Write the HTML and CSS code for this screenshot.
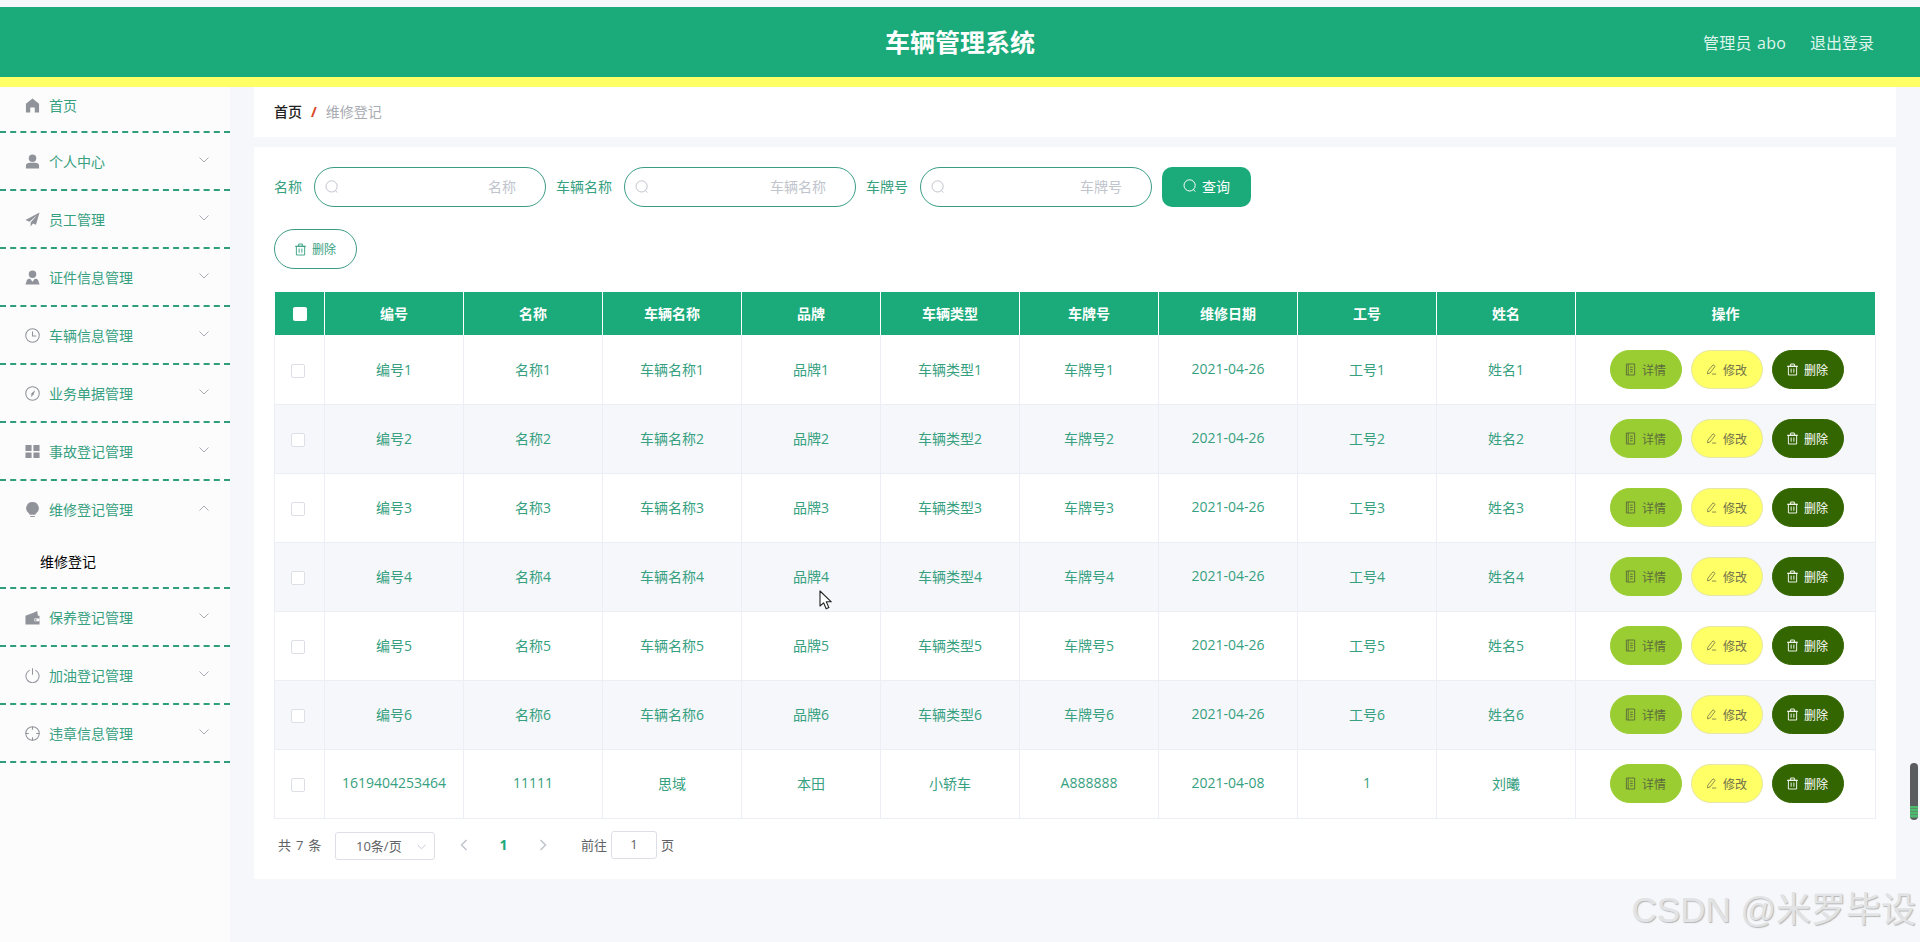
FILE: index.html
```html
<!DOCTYPE html>
<html lang="zh-CN">
<head>
<meta charset="utf-8">
<title>车辆管理系统</title>
<link rel="stylesheet" href="styles.css">
</head>
<body>
<svg class="defs" width="0" height="0" aria-hidden="true">
  <defs>
    <symbol id="i-search" viewBox="0 0 14 14"><circle cx="6.6" cy="6.4" r="5.6" fill="none" stroke="currentColor" stroke-width="1"/><path d="M10.4 10.4l1.8 2.2" stroke="currentColor" fill="none"/></symbol>
    <symbol id="i-trash" viewBox="0 0 12 14"><path d="M1.500 3.500h9V13h-9zM0 3.500h12M4 3.500V1h4v2.500M4.500 6v4.500M7.500 6v4.500" fill="none" stroke="currentColor" stroke-width="1"/></symbol>
    <symbol id="i-doc" viewBox="0 0 12 14"><path d="M1.500 1h9v12h-9zM3.500 1v12M5.500 4.500h3M5.500 7h3M5.500 9.500h3" fill="none" stroke="currentColor" stroke-width="1"/></symbol>
    <symbol id="i-pen" viewBox="0 0 14 14"><path d="M9 1l2.600 2L5.200 11.400 2 12.600l.3-3.400zM7.600 12.800H13" fill="none" stroke="currentColor" stroke-width="1"/></symbol>
    <symbol id="i-chev" viewBox="0 0 10 6"><path d="M.5.5L5 5 9.500.5" fill="none" stroke="currentColor" stroke-width="1"/></symbol>
    <symbol id="i-up" viewBox="0 0 10 6"><path d="M.5 5.500L5 1l4.500 4.500" fill="none" stroke="currentColor" stroke-width="1"/></symbol>
    <symbol id="i-home" viewBox="0 0 16 16"><path d="M8 .5L15 6v9.500h-4.600V10H5.600v5.500H1V6z" fill="currentColor"/></symbol>
    <symbol id="i-user" viewBox="0 0 16 16"><circle cx="8" cy="4.400" r="4" fill="currentColor"/><path d="M1 15.500v-3C1 10 3.500 9.400 8 9.400s7 .6 7 3.100v3z" fill="currentColor"/></symbol>
    <symbol id="i-user2" viewBox="0 0 16 16"><circle cx="8" cy="4.400" r="4" fill="currentColor"/><path d="M.5 15.500L2 11c.5-1.500 2-1.800 3.500-1.800L8 12.500l2.500-3.300c1.500 0 3 .3 3.500 1.800l1.500 4.500z" fill="currentColor"/></symbol>
    <symbol id="i-plane" viewBox="0 0 16 16"><path d="M15.500.5L.5 8.500l4.200 1.800L13 3.200 6 11.200v4.300l2.500-3.200 3.200 1.400z" fill="currentColor"/></symbol>
    <symbol id="i-clock" viewBox="0 0 16 16"><circle cx="8" cy="8" r="7.200" fill="none" stroke="currentColor" stroke-width="1.100"/><path d="M8 3.600V8.500h4" fill="none" stroke="currentColor" stroke-width="1.100"/></symbol>
    <symbol id="i-compass" viewBox="0 0 16 16"><circle cx="8" cy="8" r="7.200" fill="none" stroke="currentColor" stroke-width="1.100"/><path d="M10.800 4.400L9.200 9 6.500 11.600 6.900 7.600z" fill="currentColor"/></symbol>
    <symbol id="i-grid" viewBox="0 0 16 16"><path d="M.5 1h6.500v6.500H.5zM9 1h6.500v6.500H9zM.5 9H7v6H.5zM9 9h6.500v6H9z" fill="currentColor"/></symbol>
    <symbol id="i-bulb" viewBox="0 0 16 16"><path d="M8 0a6.700 6.700 0 0 1 4 12.100c-.7.500-1 .9-1 1.400H5c0-.5-.3-.9-1-1.400A6.700 6.700 0 0 1 8 0z" fill="currentColor"/><path d="M5.500 15h5v1h-5z" fill="currentColor"/></symbol>
    <symbol id="i-wallet" viewBox="0 0 16 16"><path d="M.5 6L9 3l4-2 .8 5h1.700v9.500H.5z" fill="currentColor"/><path d="M10 9h5.500v3H10z" fill="#fcfcfd"/><circle cx="11.500" cy="10.500" r=".9" fill="currentColor"/></symbol>
    <symbol id="i-power" viewBox="0 0 16 16"><path d="M5 2.300a7 7 0 1 0 6 0" fill="none" stroke="currentColor" stroke-width="1.100"/><path d="M8 .2v7" fill="none" stroke="currentColor" stroke-width="1.100"/></symbol>
    <symbol id="i-aim" viewBox="0 0 16 16"><circle cx="8" cy="8" r="7.200" fill="none" stroke="currentColor" stroke-width="1.100"/><path d="M8 .5v3.500M8 12v3.500M.5 8H4M12 8h3.500" stroke="currentColor" stroke-width="1.100"/></symbol>
  </defs>
</svg>

<header class="topbar">
  <div class="topbar-side"></div>
  <h1 class="title">车辆管理系统</h1>
  <div class="userbox"><span class="who">管理员 abo</span><span>退出登录</span></div>
</header>

<div class="layout">
  <aside class="sidebar">
    <div class="menu-item first"><svg class="mi"><use href="#i-home"/></svg><span>首页</span></div>
    <div class="menu-item"><svg class="mi"><use href="#i-user"/></svg><span>个人中心</span><svg class="chev"><use href="#i-chev"/></svg></div>
    <div class="menu-item"><svg class="mi"><use href="#i-plane"/></svg><span>员工管理</span><svg class="chev"><use href="#i-chev"/></svg></div>
    <div class="menu-item"><svg class="mi"><use href="#i-user2"/></svg><span>证件信息管理</span><svg class="chev"><use href="#i-chev"/></svg></div>
    <div class="menu-item"><svg class="mi"><use href="#i-clock"/></svg><span>车辆信息管理</span><svg class="chev"><use href="#i-chev"/></svg></div>
    <div class="menu-item"><svg class="mi"><use href="#i-compass"/></svg><span>业务单据管理</span><svg class="chev"><use href="#i-chev"/></svg></div>
    <div class="menu-item"><svg class="mi"><use href="#i-grid"/></svg><span>事故登记管理</span><svg class="chev"><use href="#i-chev"/></svg></div>
    <div class="menu-group">
      <div class="menu-head"><svg class="mi"><use href="#i-bulb"/></svg><span>维修登记管理</span><svg class="chev"><use href="#i-up"/></svg></div>
      <div class="menu-sub">维修登记</div>
    </div>
    <div class="menu-item"><svg class="mi"><use href="#i-wallet"/></svg><span>保养登记管理</span><svg class="chev"><use href="#i-chev"/></svg></div>
    <div class="menu-item"><svg class="mi"><use href="#i-power"/></svg><span>加油登记管理</span><svg class="chev"><use href="#i-chev"/></svg></div>
    <div class="menu-item"><svg class="mi"><use href="#i-aim"/></svg><span>违章信息管理</span><svg class="chev"><use href="#i-chev"/></svg></div>
  </aside>

  <main class="main">
    <nav class="crumbs"><b>首页</b><i>/</i><span>维修登记</span></nav>
    <section class="card">
      <form class="search">
        <label>名称</label>
        <div class="field"><svg class="si"><use href="#i-search"/></svg><input placeholder="名称"></div>
        <label>车辆名称</label>
        <div class="field"><svg class="si"><use href="#i-search"/></svg><input placeholder="车辆名称"></div>
        <label>车牌号</label>
        <div class="field"><svg class="si"><use href="#i-search"/></svg><input placeholder="车牌号"></div>
        <button type="button" class="query"><svg class="qi"><use href="#i-search"/></svg>查询</button>
      </form>
      <div class="tools"><button type="button" class="bulk"><svg class="bi"><use href="#i-trash"/></svg>删除</button></div>

      <table class="grid">
        <colgroup><col class="c0"><col class="c1"><col class="c1"><col class="c1"><col class="c1"><col class="c1"><col class="c1"><col class="c1"><col class="c1"><col class="c1"><col class="c2"></colgroup>
        <thead>
          <tr><th><span class="hcheck"></span></th><th>编号</th><th>名称</th><th>车辆名称</th><th>品牌</th><th>车辆类型</th><th>车牌号</th><th>维修日期</th><th>工号</th><th>姓名</th><th>操作</th></tr>
        </thead>
        <tbody>
          <tr><td><span class="check"></span></td><td>编号1</td><td>名称1</td><td>车辆名称1</td><td>品牌1</td><td>车辆类型1</td><td>车牌号1</td><td>2021-04-26</td><td>工号1</td><td>姓名1</td><td><div class="ops"><button type="button" class="op view"><svg><use href="#i-doc"/></svg>详情</button><button type="button" class="op edit"><svg><use href="#i-pen"/></svg>修改</button><button type="button" class="op del"><svg><use href="#i-trash"/></svg>删除</button></div></td></tr>
          <tr><td><span class="check"></span></td><td>编号2</td><td>名称2</td><td>车辆名称2</td><td>品牌2</td><td>车辆类型2</td><td>车牌号2</td><td>2021-04-26</td><td>工号2</td><td>姓名2</td><td><div class="ops"><button type="button" class="op view"><svg><use href="#i-doc"/></svg>详情</button><button type="button" class="op edit"><svg><use href="#i-pen"/></svg>修改</button><button type="button" class="op del"><svg><use href="#i-trash"/></svg>删除</button></div></td></tr>
          <tr><td><span class="check"></span></td><td>编号3</td><td>名称3</td><td>车辆名称3</td><td>品牌3</td><td>车辆类型3</td><td>车牌号3</td><td>2021-04-26</td><td>工号3</td><td>姓名3</td><td><div class="ops"><button type="button" class="op view"><svg><use href="#i-doc"/></svg>详情</button><button type="button" class="op edit"><svg><use href="#i-pen"/></svg>修改</button><button type="button" class="op del"><svg><use href="#i-trash"/></svg>删除</button></div></td></tr>
          <tr><td><span class="check"></span></td><td>编号4</td><td>名称4</td><td>车辆名称4</td><td>品牌4</td><td>车辆类型4</td><td>车牌号4</td><td>2021-04-26</td><td>工号4</td><td>姓名4</td><td><div class="ops"><button type="button" class="op view"><svg><use href="#i-doc"/></svg>详情</button><button type="button" class="op edit"><svg><use href="#i-pen"/></svg>修改</button><button type="button" class="op del"><svg><use href="#i-trash"/></svg>删除</button></div></td></tr>
          <tr><td><span class="check"></span></td><td>编号5</td><td>名称5</td><td>车辆名称5</td><td>品牌5</td><td>车辆类型5</td><td>车牌号5</td><td>2021-04-26</td><td>工号5</td><td>姓名5</td><td><div class="ops"><button type="button" class="op view"><svg><use href="#i-doc"/></svg>详情</button><button type="button" class="op edit"><svg><use href="#i-pen"/></svg>修改</button><button type="button" class="op del"><svg><use href="#i-trash"/></svg>删除</button></div></td></tr>
          <tr><td><span class="check"></span></td><td>编号6</td><td>名称6</td><td>车辆名称6</td><td>品牌6</td><td>车辆类型6</td><td>车牌号6</td><td>2021-04-26</td><td>工号6</td><td>姓名6</td><td><div class="ops"><button type="button" class="op view"><svg><use href="#i-doc"/></svg>详情</button><button type="button" class="op edit"><svg><use href="#i-pen"/></svg>修改</button><button type="button" class="op del"><svg><use href="#i-trash"/></svg>删除</button></div></td></tr>
          <tr><td><span class="check"></span></td><td>1619404253464</td><td>11111</td><td>思域</td><td>本田</td><td>小轿车</td><td>A888888</td><td>2021-04-08</td><td>1</td><td>刘曦</td><td><div class="ops"><button type="button" class="op view"><svg><use href="#i-doc"/></svg>详情</button><button type="button" class="op edit"><svg><use href="#i-pen"/></svg>修改</button><button type="button" class="op del"><svg><use href="#i-trash"/></svg>删除</button></div></td></tr>
        </tbody>
      </table>

      <div class="pager">
        <span class="total">共 7 条</span>
        <div class="size"><span>10条/页</span><svg><use href="#i-chev"/></svg></div>
        <svg class="arrow" viewBox="0 0 8 12"><path d="M6.500 1L1.500 6l5 5" fill="none" stroke="currentColor" stroke-width="1.500"/></svg>
        <b class="page">1</b>
        <svg class="arrow" viewBox="0 0 8 12"><path d="M1.500 1l5 5-5 5" fill="none" stroke="currentColor" stroke-width="1.500"/></svg>
        <span class="goto">前往</span>
        <div class="jump">1</div>
        <span class="unit">页</span>
      </div>
    </section>
  </main>
</div>

<div class="scrollthumb"><div class="scrollgreen"></div></div>
<svg class="cursor" viewBox="0 0 14 20"><path d="M1 1v15l3.600-3.200 2.600 6 2.700-1.200-2.600-5.800h5z" fill="#fff" stroke="#222" stroke-width="1.100" stroke-linejoin="round"/></svg>
<div class="watermark">CSDN @米罗毕设</div>
</body>
</html>
```
FILE: styles.css
```css
* { box-sizing: border-box; }
html, body { margin: 0; height: 942px; overflow: hidden; }
body {
  font-family: "Open Sans", "Noto Sans CJK SC", sans-serif;
  font-size: 14px;
  color: #36a07f;
  background: #f5f7fa;
  padding-top: 7px;
}
.defs { position: absolute; }
button, input { font-family: inherit; }

.topbar {
  height: 80px;
  background: #1baa7a;
  border-bottom: 10px solid #ffff66;
  display: grid;
  grid-template-columns: 1fr auto 1fr;
  align-items: center;
}
.title { margin: 0; font-size: 25px; font-weight: 700; color: #fff; line-height: 70px; }
.userbox { display: flex; justify-content: flex-end; gap: 24px; padding-right: 46px; font-size: 16px; color: #dff5ec; }
.who { word-spacing: 1px; letter-spacing: .2px; }

.layout { display: flex; height: 855px; }
.sidebar { width: 230px; flex: none; background: #fcfcfd; }
.menu-item, .menu-group { border-bottom: 2px dashed #2f9e7d; }
.menu-item { height: 58px; }
.menu-item, .menu-head { display: flex; align-items: center; padding-left: 25px; position: relative; }
.menu-item.first { height: 46px; padding-bottom: 8px; }
.menu-head { height: 56px; }
.mi { width: 15px; height: 15px; color: #909399; margin-right: 9px; flex: none; }
.chev { position: absolute; left: 199px; top: 24px; width: 10px; height: 6px; color: #a8abb2; }
.menu-sub { height: 50px; line-height: 50px; padding-left: 40px; color: #000; }

.main { flex: 1; padding: 0 24px; min-width: 0; }
.crumbs { height: 50px; background: #fff; display: flex; align-items: center; padding: 0 0 2px 20px; font-size: 14px; color: #a8abb2; margin-bottom: 10px; }
.crumbs b { color: #222; font-weight: 500; }
.crumbs i { color: #d8431e; font-weight: 700; font-style: normal; margin: 0 9px; }

.card { background: #fff; height: 732px; padding: 20px 20px 0; }
.search { display: flex; align-items: center; height: 40px; }
.search label { margin-right: 12px; padding-bottom: 2px; }
.field { width: 232px; height: 40px; border: 1px solid #3b9c86; border-radius: 20px; display: flex; align-items: center; padding: 0 29px 0 10px; margin-right: 10px; }
.si { width: 14px; height: 14px; color: #c0c4cc; flex: none; }
.field input { flex: 1; min-width: 0; border: 0; outline: 0; background: none; text-align: right; font-size: 14px; padding: 0 0 2px; }
.field input::placeholder { color: #c0c4cc; }
.query { width: 89px; height: 40px; border: 0; border-radius: 10px; background: #1baa7a; color: #fff; font-size: 14px; display: flex; align-items: center; justify-content: center; gap: 5px; padding: 0 0 2px; }
.qi { width: 14px; height: 14px; }

.tools { margin-top: 22px; height: 40px; }
.bulk { width: 83px; height: 40px; border: 1px solid #3b9c86; border-radius: 20px; background: #fff; color: #36a07f; font-size: 12px; display: flex; align-items: center; justify-content: center; gap: 6px; padding: 0; }
.bi { width: 11px; height: 13px; }

.grid { margin-top: 23px; width: 1602px; table-layout: fixed; border-collapse: separate; border-spacing: 0; }
.c0 { width: 51px; }
.c1 { width: 139px; }
.c2 { width: 300px; }
.grid th { height: 44px; background: #1baa7a; color: #fff; font-size: 14px; font-weight: 700; border-right: 1px solid #fff; border-bottom: 1px solid #fff; padding: 0 0 2px; text-align: center; }
.grid th:first-child { border-left: 1px solid #fff; }
.grid th:last-child { border-right: 1px solid #fff; }
.grid td { height: 69px; padding: 0 0 3px; text-align: center; border-right: 1px solid #ebeef5; border-bottom: 1px solid #ebeef5; background: #fff; }
.grid td:first-child { border-left: 1px solid #ebeef5; }
.grid tbody tr:nth-child(even) td { background: #f5f7fa; }
.hcheck, .check { display: inline-block; width: 14px; height: 14px; border-radius: 2px; vertical-align: middle; }
.hcheck { background: #fff; }
.check { border: 1px solid #dcdfe6; background: #fff; margin: 2px 3px 0 0; }
.ops { display: flex; justify-content: center; gap: 9px; padding-left: 2px; margin-top: 2px; }
.op { width: 72px; height: 39px; border-radius: 20px; font-size: 12px; display: flex; align-items: center; justify-content: center; gap: 6px; padding: 0; border: 1px solid transparent; }
.op svg { width: 11px; height: 13px; flex: none; }
.view { background: #9acd32; border-color: #9acd32; color: #5d6b3c; }
.edit { background: #ffff66; border-color: #e6e6a8; color: #70704a; }
.del { background: #336600; border-color: #336600; color: #fff; }

.pager { display: flex; align-items: center; height: 28px; margin-top: 12px; font-size: 13px; color: #606266; }
.total { margin-left: 4px; width: 57px; word-spacing: 1.500px; padding-bottom: 2px; }
.size { width: 100px; height: 28px; border: 1px solid #dcdfe6; border-radius: 3px; display: flex; align-items: center; padding: 0 0 2px 20px; position: relative; margin: 2px 25px 0 0; }
.size svg { position: absolute; right: 8px; top: 11px; width: 9px; height: 6px; color: #c0c4cc; }
.arrow { width: 8px; height: 12px; color: #c0c4cc; flex: none; }
.page { color: #1baa7a; font-weight: 700; font-size: 14px; width: 71px; text-align: center; padding-bottom: 2px; }
.goto { margin-left: 34px; margin-right: 4px; padding-bottom: 2px; }
.jump { width: 46px; height: 28px; border: 1px solid #dcdfe6; border-radius: 3px; line-height: 24px; text-align: center; margin-right: 4px; }
.unit { padding-bottom: 2px; }

.scrollthumb { position: absolute; left: 1910px; top: 763px; width: 8px; height: 57px; border-radius: 4px; background: #5a5d5f; overflow: hidden; }
.scrollgreen { position: absolute; left: 0; right: 0; bottom: 2px; height: 12px; background: repeating-linear-gradient(#4cbb6c 0 2px, #5a8f70 2px 3px); }
.cursor { position: absolute; left: 819px; top: 590px; width: 14px; height: 20px; }
.watermark { position: absolute; right: 4px; top: 886px; font-size: 35px; line-height: 48px; color: #e2e3e5; text-shadow: 1px 1px 1px #b5b6b8; white-space: nowrap; font-family: "Liberation Sans", "Noto Sans CJK SC", sans-serif; }
```
